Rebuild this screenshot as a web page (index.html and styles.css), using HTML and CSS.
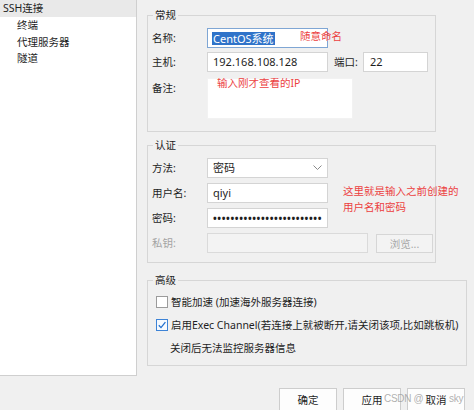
FILE: index.html
```html
<!DOCTYPE html>
<html lang="zh-CN">
<head>
  <meta charset="UTF-8">
  <meta name="viewport" content="width=device-width, initial-scale=1.0">
  <title>SSH连接</title>
  <link rel="stylesheet" href="styles.css">
</head>
<body>
  <div class="dialog">
    <div class="tree">
      <div class="tree-item selected">SSH连接</div>
      <div class="tree-item child">终端</div>
      <div class="tree-item child">代理服务器</div>
      <div class="tree-item child">隧道</div>
    </div>

    <div class="main">
      <fieldset class="group group-general">
        <legend>常规</legend>
        <div class="row">
          <span class="label">名称:</span>
          <div class="field focus w-md"><span class="sel">CentOS系统</span></div>
        </div>
        <div class="row row-host">
          <span class="label">主机:</span>
          <div class="field w-md">192.168.108.128</div>
          <span class="label label-port">端口:</span>
          <div class="field w-port">22</div>
        </div>
        <div class="row row-top">
          <span class="label label-top">备注:</span>
          <div class="field area w-remark"></div>
        </div>
      </fieldset>

      <fieldset class="group group-auth">
        <legend>认证</legend>
        <div class="row">
          <span class="label">方法:</span>
          <div class="field select w-md">
            <span>密码</span>
            <svg class="chevron" width="9" height="6" viewBox="0 0 9 6">
              <polyline points="0.5,0.5 4.5,4.5 8.5,0.5" fill="none" stroke="#8a8a8a" stroke-width="1"/>
            </svg>
          </div>
        </div>
        <div class="row">
          <span class="label">用户名:</span>
          <div class="field w-md">qiyi</div>
        </div>
        <div class="row">
          <span class="label">密码:</span>
          <div class="field dots w-md">•••••••••••••••••••••••••</div>
        </div>
        <div class="row">
          <span class="label disabled">私钥:</span>
          <div class="field off w-key"></div>
          <button class="btn btn-browse" disabled>浏览...</button>
        </div>
      </fieldset>

      <fieldset class="group group-adv">
        <legend>高级</legend>
        <div class="check-row">
          <span class="box"></span>
          <span>智能加速 (加速海外服务器连接)</span>
        </div>
        <div class="check-row">
          <span class="box checked">
            <svg width="10" height="10" viewBox="0 0 10 10">
              <polyline points="1.8,5.2 4,7.6 8.4,2.2" fill="none" stroke="#1f6fcf" stroke-width="1.3"/>
            </svg>
          </span>
          <span>启用Exec Channel(若连接上就被断开,请关闭该项,比如跳板机)</span>
        </div>
        <div class="check-row note">关闭后无法监控服务器信息</div>
      </fieldset>

      <div class="buttons">
        <button class="btn">确定</button>
        <button class="btn">应用</button>
        <button class="btn">取消</button>
      </div>
    </div>

    <div class="mark mark-name">随意命名</div>
    <div class="mark mark-ip">输入刚才查看的IP</div>
    <div class="mark mark-user">这里就是输入之前创建的<br>用户名和密码</div>
    <div class="watermark wm-left">CSDN @</div>
    <div class="watermark wm-right">sky</div>
  </div>
</body>
</html>
```

FILE: styles.css
```css
* {
  box-sizing: border-box;
}

html, body {
  margin: 0;
  width: 474px;
  height: 410px;
  overflow: hidden;
}

body {
  background: #f0f0f0;
  font-family: "Noto Sans", "Noto Sans CJK SC", sans-serif;
  font-size: 10.5px;
  color: #1e1e1e;
}

.dialog {
  position: relative;
  display: flex;
  align-items: flex-start;
  height: 410px;
}

/* left tree */
.tree {
  width: 137px;
  height: 376px;
  background: #fff;
  border-right: 1px solid #cfcfcf;
  border-bottom: 1px solid #cfcfcf;
  flex-shrink: 0;
}

.tree-item {
  height: 16.5px;
  line-height: 16.5px;
  padding-left: 3px;
}

.tree-item.selected {
  height: 17px;
  line-height: 17px;
  background: #e9e9e9;
}

.tree-item.child {
  padding-left: 17px;
}

/* right side */
.main {
  margin-left: 10px;
  display: flex;
  flex-direction: column;
  align-items: flex-start;
}

.group {
  margin: 0;
  padding: 6px 0 12px 4px;
  border: 1px solid #d6d6d6;
  min-width: 0;
}

.group legend {
  padding: 0 2px;
  margin-left: 1px;
  line-height: 14px;
  height: 14px;
}

.group-general {
  margin-top: 8px;
  width: 289px;
}

.group-auth {
  margin-top: 6px;
  width: 289px;
  padding-bottom: 9px;
}

.group-auth .row + .row {
  margin-top: 5px;
}

.group-adv {
  margin-top: 10px;
  width: 320px;
  padding-top: 3px;
  padding-bottom: 6px;
}

.row {
  display: flex;
  align-items: center;
}

.row-host {
  margin-top: 4px;
}

.row-top {
  margin-top: 6px;
  align-items: flex-start;
}

.label {
  width: 55px;
  flex-shrink: 0;
  line-height: 20px;
}

.label-top {
  line-height: 20px;
}

.label-port {
  width: 29px;
  margin-left: 6px;
}

.label.disabled {
  color: #a3a3a3;
}

.field {
  height: 20px;
  line-height: 18px;
  padding: 0 5px;
  background: #fff;
  border: 1px solid #d4d4d4;
  font-size: 11px;
  white-space: nowrap;
  overflow: hidden;
}

.field.focus {
  border-color: #7fa6d4;
  padding-left: 4px;
}

.sel {
  display: inline-block;
  line-height: 13px;
  padding: 0 1px;
  background: #2f73c9;
  color: #fff;
  vertical-align: middle;
  margin-top: -2px;
}

.field.area {
  height: 41px;
  border-color: #f2f2f2;
}

.field.select {
  display: flex;
  align-items: center;
  justify-content: space-between;
  padding-right: 5px;
}

.field.dots {
  font-size: 10px;
  letter-spacing: 0.6px;
  font-weight: bold;
}

.field.off {
  background: #f3f3f3;
  border-color: #dadada;
}

.w-md {
  width: 121px;
}

.w-port {
  width: 65px;
  padding-left: 6px;
}

.w-remark {
  width: 146px;
}

.w-key {
  width: 161px;
}

.btn {
  height: 23px;
  width: 58px;
  padding: 0;
  font-family: inherit;
  font-size: 10.5px;
  color: #1e1e1e;
  background: #fdfdfd;
  border: 1px solid #cdcdcd;
  border-radius: 0;
}

.btn-browse {
  width: 57px;
  height: 19px;
  margin-left: 8px;
  background: #f3f3f3;
  color: #a8a8a8;
  border-color: #d6d6d6;
}

/* checkboxes */
.check-row {
  display: flex;
  align-items: center;
  height: 23px;
  padding-left: 4px;
}

.check-row.note {
  padding-left: 18px;
}

.box {
  width: 12px;
  height: 12px;
  margin-right: 3px;
  border: 1px solid #9b9b9b;
  background: #fff;
  display: flex;
  align-items: center;
  justify-content: center;
}

.box.checked {
  border-color: #3d83d6;
  background: #f5f9fe;
}

.buttons {
  margin-top: 22px;
  width: 320px;
  padding-right: 2px;
  display: flex;
  justify-content: flex-end;
  gap: 6px;
}

/* annotations drawn over the screenshot */
.mark {
  position: absolute;
  color: #ec3f3f;
  font-size: 10.5px;
  line-height: 14px;
  white-space: nowrap;
}

.mark-name {
  left: 300px;
  top: 29px;
}

.mark-ip {
  left: 217px;
  top: 76px;
}

.mark-user {
  left: 343px;
  top: 183px;
  line-height: 16px;
}

.watermark {
  position: absolute;
  top: 393px;
  font-family: "Liberation Sans", sans-serif;
  font-size: 10px;
  line-height: 12px;
  letter-spacing: -0.3px;
  color: rgba(150, 150, 150, 0.75);
  white-space: nowrap;
}

.wm-left {
  left: 384px;
}

.wm-right {
  left: 449px;
}
```
